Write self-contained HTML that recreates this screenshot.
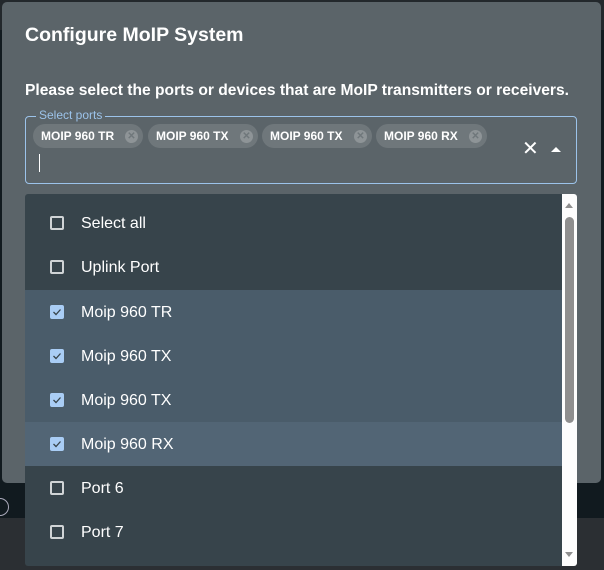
<!DOCTYPE html>
<html><head><meta charset="utf-8"><style>
*{box-sizing:border-box;margin:0;padding:0}
body{width:604px;height:570px;overflow:hidden;background:#111a1f;font-family:"Liberation Sans",Arial,sans-serif;position:relative}
.bgband{position:absolute;left:0;top:518px;width:604px;height:52px;background:#2b2f33}
.bgtop{position:absolute;left:0;top:0;width:604px;height:30px;background:#23282c}
.dlg{position:absolute;left:2px;top:2px;width:599px;height:481px;background:#5b6469;border-radius:5px}
h1{position:absolute;left:25px;top:24px;font-size:19.5px;font-weight:bold;color:#fff}
.p{position:absolute;left:25px;top:82px;font-size:15.6px;font-weight:bold;color:#fff;white-space:nowrap}
.field{position:absolute;left:25px;top:116px;width:552px;height:68px;border:1.5px solid #9cc3ea;border-radius:4px}
.lbl{position:absolute;left:36px;top:108px;padding:0 3px;background:#5b6469;font-size:12px;color:#9cc3ea}
.chip{position:absolute;top:124px;height:24px;border-radius:12px;background:#6f777b;color:#fff;font-size:12px;font-weight:bold;line-height:24px;padding-left:8px}
.chip i{position:absolute;right:5px;top:6px;width:13px;height:13px;border-radius:50%;background:#8e9497;color:#6f777b;font-style:normal;font-size:10px;line-height:13px;text-align:center}
.caret{position:absolute;left:39px;top:154px;width:1px;height:18px;background:#fff}
.x{position:absolute;left:522px;top:139px;color:#fff;font-size:20px;line-height:20px}
.tri{position:absolute;left:551px;top:147px;width:0;height:0;border-left:5px solid transparent;border-right:5px solid transparent;border-bottom:5px solid #fff}
.list{position:absolute;left:25px;top:194px;width:552px;height:372px;background:#37444b;border-radius:3px;overflow:hidden}
.row{position:absolute;left:0;width:537px;height:44px;color:#fff;font-size:16px;line-height:46px;padding-left:56px}
.row.s{background:#4a5c6a}
.row.h{background:#526575}
.cb{position:absolute;left:25px;top:15px;width:14px;height:14px;border:2px solid #d0d4d6;border-radius:2px}
.s .cb,.h .cb{background:#a9cdf5;border-color:#a9cdf5}
.cb svg{position:absolute;left:0;top:0}
.sb{position:absolute;left:537px;top:0;width:15px;height:372px;background:#fdfdfd}
.thumb{position:absolute;left:3px;top:23px;width:9px;height:206px;border-radius:5px;background:#8f8f8f}
.au{position:absolute;left:3px;top:9px;border-left:4.5px solid transparent;border-right:4.5px solid transparent;border-bottom:5px solid #8f8f8f}
.ad{position:absolute;left:3px;top:358px;border-left:4.5px solid transparent;border-right:4.5px solid transparent;border-top:5px solid #8f8f8f}
.info{position:absolute;left:-9px;top:498px;width:18px;height:18px;border:1.5px solid #aab;border-radius:50%}
</style></head><body>
<div class="bgtop"></div><div class="bgband"></div>
<div class="info"></div>
<div class="dlg"></div>
<h1>Configure MoIP System</h1>
<div class="p">Please select the ports or devices that are MoIP transmitters or receivers.</div>
<div class="field"></div>
<div class="lbl">Select ports</div>
<div class="chip" style="left:33px;width:110px">MOIP 960 TR<i>✕</i></div>
<div class="chip" style="left:148px;width:110px">MOIP 960 TX<i>✕</i></div>
<div class="chip" style="left:262px;width:110px">MOIP 960 TX<i>✕</i></div>
<div class="chip" style="left:376px;width:111px">MOIP 960 RX<i>✕</i></div>
<div class="caret"></div>
<div class="x">✕</div>
<div class="tri"></div>
<div class="list">
<div class="row" style="top:7px"><span class="cb"></span>Select all</div>
<div class="row" style="top:51px"><span class="cb"></span>Uplink Port</div>
<div class="row s" style="top:96px;height:44px"><span class="cb"><svg width="10" height="10" viewBox="0 0 10 10"><path d="M1.5 5 L4 7.5 L8.5 2.5" stroke="#37444b" stroke-width="1.3" fill="none"/></svg></span>Moip 960 TR</div>
<div class="row s" style="top:140px"><span class="cb"><svg width="10" height="10" viewBox="0 0 10 10"><path d="M1.5 5 L4 7.5 L8.5 2.5" stroke="#37444b" stroke-width="1.3" fill="none"/></svg></span>Moip 960 TX</div>
<div class="row s" style="top:184px"><span class="cb"><svg width="10" height="10" viewBox="0 0 10 10"><path d="M1.5 5 L4 7.5 L8.5 2.5" stroke="#37444b" stroke-width="1.3" fill="none"/></svg></span>Moip 960 TX</div>
<div class="row h" style="top:228px"><span class="cb"><svg width="10" height="10" viewBox="0 0 10 10"><path d="M1.5 5 L4 7.5 L8.5 2.5" stroke="#37444b" stroke-width="1.3" fill="none"/></svg></span>Moip 960 RX</div>
<div class="row" style="top:272px"><span class="cb"></span>Port 6</div>
<div class="row" style="top:316px"><span class="cb"></span>Port 7</div>
<div class="sb"><div class="au"></div><div class="thumb"></div><div class="ad"></div></div>
</div>
</body></html>
